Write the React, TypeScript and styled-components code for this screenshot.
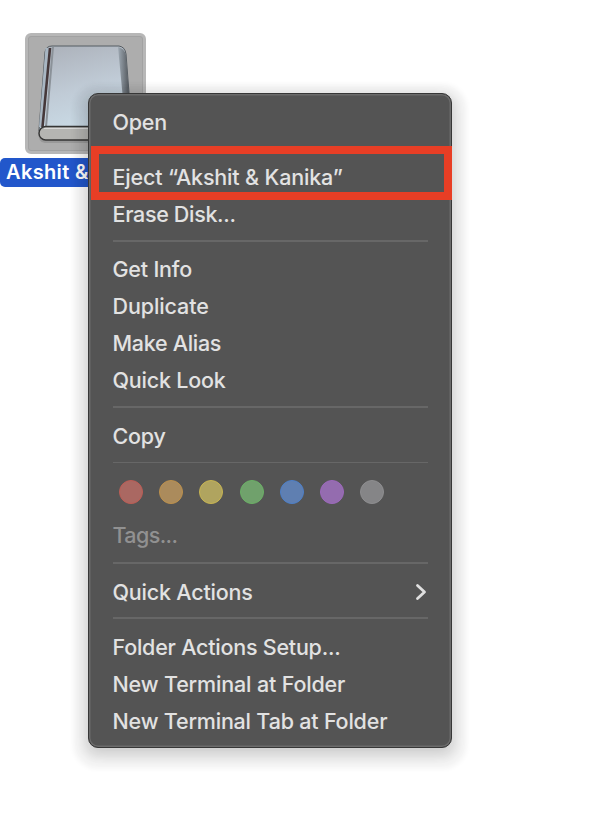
import React from "react";
import styled, { createGlobalStyle } from "styled-components";

const GlobalStyle = createGlobalStyle`
  html, body { margin: 0; background: #fff; overflow: hidden; }
  * { box-sizing: border-box; }
`;

const Desktop = styled.main`
  position: relative;
  width: 600px;
  height: 820px;
  overflow: hidden;
  background: #fff;
  font-family: Inter, "Liberation Sans", sans-serif;
`;

const Volume = styled.section`
  position: absolute;
  left: 0;
  top: 33px;
  width: 171px;
  display: flex;
  flex-direction: column;
  align-items: center;
  gap: 4px;
`;

const IconTile = styled.div`
  width: 121px;
  height: 121px;
  border: 3px solid #b7b7b7;
  border-radius: 6px;
  background: #adadad;
  box-shadow: inset 0 0 0 1px #a2a2a2;

  svg { display: block; margin: -3px; }
`;

const VolumeName = styled.div`
  align-self: flex-start;
  width: 100px;
  height: 29px;
  padding-left: 6px;
  border-radius: 5px;
  background: #2257cb;
  color: #fff;
  font-size: 20px;
  font-weight: 600;
  line-height: 29px;
  letter-spacing: 0.35px;
  white-space: nowrap;
`;

const Menu = styled.nav`
  position: absolute;
  left: 88px;
  top: 93px;
  width: 364px;
  height: 655px;
  padding: 9px 24px 0 23.5px;
  border: 1px solid #373737;
  border-radius: 10px;
  background: #545454;
  box-shadow: inset 0 0 0 1.5px #6b6b6b, 0 5px 12px rgba(0, 0, 0, 0.13),
    0 5px 8px 8px rgba(0, 0, 0, 0.045), 0 6px 5px 15px rgba(0, 0, 0, 0.045);
`;

const Item = styled.div<{ $muted?: boolean; $track?: number }>`
  display: flex;
  align-items: center;
  justify-content: space-between;
  height: 37px;
  color: ${(p) => (p.$muted ? "#919191" : "#e2e2e2")};
  font-size: 21.5px;
  font-weight: 450;
  letter-spacing: ${(p) => p.$track ?? -0.2}px;
  white-space: nowrap;
`;

const Separator = styled.hr<{ $before?: number; $after?: number; $thick?: number }>`
  height: ${(p) => p.$thick ?? 2}px;
  margin: ${(p) => p.$before ?? 7}px -1px ${(p) => p.$after ?? 9.5}px 0;
  border: 0;
  background: #676767;
`;

const Tags = styled.div`
  display: flex;
  gap: 16.3px;
  height: 24px;
  margin-bottom: 12px;
  padding-left: 6.2px;
`;

const Tag = styled.span<{ $fill: string; $edge: string }>`
  width: 24px;
  height: 24px;
  flex: none;
  border: 1.5px solid ${(p) => p.$edge};
  border-radius: 50%;
  background: ${(p) => p.$fill};
`;

const Highlight = styled.div`
  position: absolute;
  left: 91px;
  top: 146px;
  width: 361px;
  height: 54px;
  border: 8px solid #e83e25;
`;

const Chevron = styled.svg`
  width: 12px;
  height: 18px;
`;

const tagColors = [
  ["#aa6862", "#bd5d55"],
  ["#ab8b5c", "#bd914c"],
  ["#b0a45f", "#c8b552"],
  ["#70a16c", "#6bb166"],
  ["#5f7fb1", "#4d80c9"],
  ["#946caf", "#9d69bd"],
  ["#858587", "#8e8e90"],
];

function DriveIcon() {
  return (
    <svg width="121" height="121" viewBox="0 0 121 121">
      <defs>
        <linearGradient id="cover" x1="0.3" y1="0" x2="0.6" y2="1">
          <stop offset="0" stopColor="#aeb4bd" />
          <stop offset="0.5" stopColor="#c0cbd6" />
          <stop offset="1" stopColor="#cbdde8" />
        </linearGradient>
        <linearGradient id="edge" x1="0" x2="1">
          <stop offset="0" stopColor="#9ea9b3" />
          <stop offset="1" stopColor="#3e4145" />
        </linearGradient>
      </defs>
      <path d="M13 98Q13 110 20 110H101Q108 108 106 98L101 20Q100 13 94 13H26Q21 13 20 20Z" fill="#999" />
      <path d="M20 19Q21 13 27 13H94Q100 14 101 21L107 98H14Z" fill="url(#cover)" stroke="#555c62" />
      <path d="M22 15L15.5 94" stroke="#a8b6c2" strokeWidth="3" />
      <path d="M25 15L17.5 94" stroke="#45383a" strokeWidth="2.6" />
      <path d="M28 14L21 94" stroke="#8b9299" strokeWidth="2" />
      <path d="M93 14Q99 15 101 22L107 98H101Z" fill="url(#edge)" />
      <rect x="14" y="93.5" width="93" height="13.5" rx="6.7" fill="#b5b5b2" stroke="#353535" strokeWidth="1.4" />
      <path d="M19 95.5H103" stroke="#dadada" />
    </svg>
  );
}

export default function App() {
  return (
    <>
      <GlobalStyle />
      <Desktop>
        <Volume>
          <IconTile><DriveIcon /></IconTile>
          <VolumeName>Akshit &amp;</VolumeName>
        </Volume>
        <Menu>
          <Item>Open</Item>
          <Separator />
          <Item $track={-0.16}>Eject “Akshit &amp; Kanika”</Item>
          <Item $track={-0.33}>Erase Disk...</Item>
          <Separator $after={8.5} />
          <Item>Get Info</Item>
          <Item $track={-0.1}>Duplicate</Item>
          <Item $track={-0.3}>Make Alias</Item>
          <Item>Quick Look</Item>
          <Separator $before={7.5} />
          <Item>Copy</Item>
          <Separator $before={7.5} $thick={1.5} $after={17} />
          <Tags>
            {tagColors.map(([fill, edge]) => <Tag key={fill} $fill={fill} $edge={edge} />)}
          </Tags>
          <Item $muted $track={-0.6}>Tags...</Item>
          <Separator $before={8.5} $after={9.5} />
          <Item>
            Quick Actions
            <Chevron viewBox="0 0 12 18">
              <path d="M2.5 2.5L9.5 9L2.5 15.5" fill="none" stroke="#e0e0e0" strokeWidth="2.8" strokeLinecap="round" strokeLinejoin="round" />
            </Chevron>
          </Item>
          <Separator $thick={1.5} $after={10} />
          <Item $track={-0.23}>Folder Actions Setup...</Item>
          <Item $track={-0.16}>New Terminal at Folder</Item>
          <Item>New Terminal Tab at Folder</Item>
        </Menu>
        <Highlight />
      </Desktop>
    </>
  );
}
